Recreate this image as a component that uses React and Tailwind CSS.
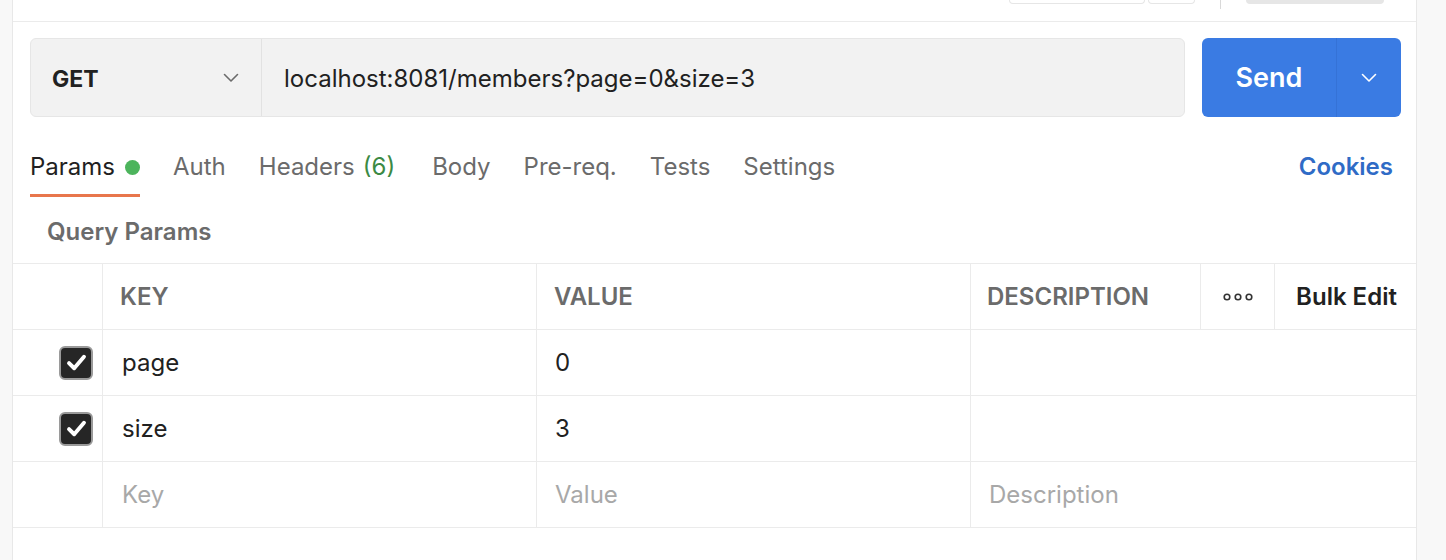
import { Fragment } from "react";

const Chevron = ({ className }) => (
  <svg viewBox="0 0 16 10" className={className} fill="none" stroke="currentColor" strokeWidth="1.6">
    <path d="M1.5 1.5 8 8l6.5-6.5" strokeLinecap="round" strokeLinejoin="round" />
  </svg>
);

const Check = () => (
  <div className="w-[34px] h-[34px] rounded-[6px] bg-[#262626] border-2 border-[#9a9a9a] flex items-center justify-center">
    <svg viewBox="0 0 20 20" className="w-[23px] h-[23px]" fill="none" stroke="white" strokeWidth="3.4">
      <path d="M3.5 10.5 8 15 16.5 5" strokeLinecap="round" strokeLinejoin="round" />
    </svg>
  </div>
);

const Dots = () => (
  <svg viewBox="0 0 30 8" className="w-[30px] h-[8px]" fill="none" stroke="#333" strokeWidth="1.6">
    <circle cx="4" cy="4" r="2.8" />
    <circle cx="15" cy="4" r="2.8" />
    <circle cx="26" cy="4" r="2.8" />
  </svg>
);

const tabs = [
  { label: "Auth" },
  { label: "Headers", count: "(6)" },
  { label: "Body", extra: true },
  { label: "Pre-req." },
  { label: "Tests" },
  { label: "Settings" },
];

const rows = [
  { key: "page", value: "0" },
  { key: "size", value: "3" },
];

const cell = "border-r border-[#ebebeb] flex items-center";

export default function App() {
  return (
    <div className="w-[1446px] h-[560px] flex bg-[#f9f9f9] overflow-hidden" style={{ fontFamily: "Inter, 'Noto Sans', sans-serif" }}>
      <div className="w-[13px] border-r border-[#e8e8e8] bg-[#f8f8f8]" />

      <div className="w-[1404px] bg-white border-r border-[#e8e8e8] flex flex-col">
        {/* top toolbar, mostly scrolled out of view */}
        <div className="h-[22px] border-b border-[#ebebeb] flex items-start overflow-hidden">
          <div className="flex items-start ml-[996px] gap-[3px]">
            <div className="w-[136px] h-[4px] border border-t-0 border-[#e6e6e6] rounded-b-[6px]" />
            <div className="w-[47px] h-[4px] border border-t-0 border-[#e6e6e6] rounded-b-[6px]" />
          </div>
          <div className="w-px h-[9px] bg-[#d9d9d9] ml-[25px]" />
          <div className="w-[138px] h-[4px] bg-[#e6e6e6] rounded-b-[6px] ml-[25px]" />
        </div>

        {/* request bar */}
        <div className="flex pt-[16px] pl-[17px] pr-[15px] gap-[17px]">
          <div className="flex-1 h-[79px] flex bg-[#f2f2f2] border border-[#e6e6e6] rounded-[6px]">
            <div className="w-[231px] border-r border-[#e2e2e2] flex items-center justify-between pl-[21px] pr-[22px]">
              <span className="text-[23px] font-bold text-[#212121] pt-[3px]">GET</span>
              <Chevron className="w-[16px] h-[10px] text-[#6b6b6b]" />
            </div>
            <div className="flex items-center pl-[22px] pt-[3px] text-[24px] text-[#212121]">
              localhost:8081/members?page=0&amp;size=3
            </div>
          </div>
          <div className="w-[199px] h-[79px] flex bg-[#3a7be3] rounded-[6px] text-white">
            <div className="w-[135px] flex items-center justify-center pt-[2px] text-[27px] font-semibold border-r border-[#3572d6]">
              Send
            </div>
            <div className="flex-1 flex items-center justify-center">
              <Chevron className="w-[16px] h-[10px] text-white" />
            </div>
          </div>
        </div>

        {/* tabs */}
        <div className="flex items-end justify-between pl-[17px] pr-[23px] mt-[17px] h-[63px]">
          <div className="flex gap-[33px] items-end">
            <div className="flex flex-col">
              <div className="flex items-center gap-[10px] h-[60px] pt-[6px]">
                <span className="text-[24px] text-[#212121]">Params</span>
                <span className="w-[15px] h-[15px] rounded-full bg-[#4cb45c]" />
              </div>
              <div className="h-[3px] bg-[#e8764c]" />
            </div>
            {tabs.map((t) => (
              <div key={t.label} className={`flex items-center h-[63px] pt-[3px] text-[24px] text-[#6b6b6b] ${t.extra ? "ml-[4px]" : ""}`}>
                {t.label}
                {t.count && <span className="ml-[8px] text-[#3b8a44]">{t.count}</span>}
              </div>
            ))}
          </div>
          <div className="h-[63px] pt-[3px] flex items-center text-[24px] font-semibold text-[#2f6bc6]">Cookies</div>
        </div>

        <div className="h-[66px] flex items-center pl-[34px] pt-[4px] text-[24px] font-semibold text-[#6b6b6b]">Query Params</div>

        {/* params table */}
        <div className="border-t border-[#ebebeb]">
          <div className="flex h-[66px] border-b border-[#ebebeb] text-[24px] font-semibold">
            <div className={`${cell} w-[90px]`} />
            <div className={`${cell} w-[434px] pl-[17px] text-[#6b6b6b]`}>KEY</div>
            <div className={`${cell} w-[434px] pl-[17px] text-[#6b6b6b]`}>VALUE</div>
            <div className={`${cell} w-[230px] pl-[16px] text-[#6b6b6b]`}>DESCRIPTION</div>
            <div className={`${cell} w-[74px] justify-center`}>
              <Dots />
            </div>
            <div className="flex-1 flex items-center justify-center pl-[2px] text-[#212121]">Bulk Edit</div>
          </div>
          {rows.map((r) => (
            <Fragment key={r.key}>
              <div className="flex h-[66px] border-b border-[#ebebeb] text-[24px] text-[#212121]">
                <div className={`${cell} w-[90px] justify-end pr-[9px]`}>
                  <Check />
                </div>
                <div className={`${cell} w-[434px] pl-[19px]`}>{r.key}</div>
                <div className={`${cell} w-[434px] pl-[18px]`}>{r.value}</div>
                <div className="flex-1" />
              </div>
            </Fragment>
          ))}
          <div className="flex h-[66px] border-b border-[#ebebeb] text-[24px] text-[#a8a8a8]">
            <div className={`${cell} w-[90px]`} />
            <div className={`${cell} w-[434px] pl-[19px]`}>Key</div>
            <div className={`${cell} w-[434px] pl-[18px]`}>Value</div>
            <div className="flex-1 flex items-center pl-[18px]">Description</div>
          </div>
        </div>
      </div>

      <div className="flex-1 bg-[#f8f8f8]" />
    </div>
  );
}
